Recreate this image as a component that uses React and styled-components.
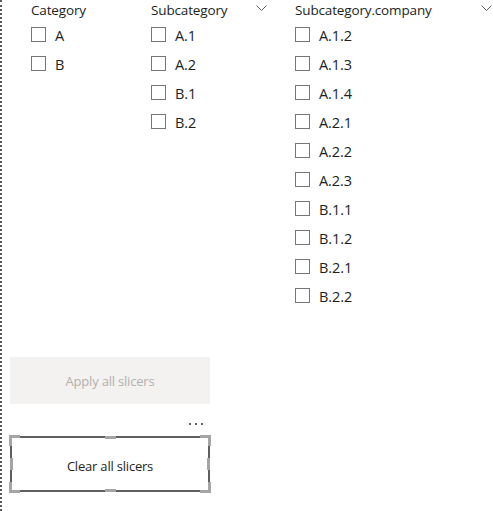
import React from "react";
import styled, { createGlobalStyle } from "styled-components";

const Global = createGlobalStyle`
  html, body { margin: 0; padding: 0; background: #fff; }
  body { font-family: "Segoe UI", "Open Sans", "Noto Sans", sans-serif; color: #252423; }
`;

const Page = styled.div`
  box-sizing: border-box;
  width: 493px;
  height: 511px;
  border-left: 2px dotted #5a5a5a;
  display: flex;
  flex-direction: column;
  overflow: hidden;
`;

const Slicers = styled.div`
  display: grid;
  grid-template-columns: 120px 144px 1fr;
  margin-left: 29px;
`;

const Column = styled.div`
  display: flex;
  flex-direction: column;
`;

const Header = styled.div`
  height: 20px;
  display: flex;
  align-items: center;
  justify-content: space-between;
  padding-right: ${(p) => p.$pr || 0}px;
`;

const Title = styled.span`
  font-family: "Open Sans", sans-serif;
  font-size: 13.5px;
  letter-spacing: -0.15px;
  color: #201f1e;
  line-height: 20px;
  white-space: nowrap;
`;

const Chevron = styled.svg`
  width: 11px;
  height: 6px;
  margin-top: -4px;
  display: block;
`;

const Row = styled.label`
  height: 29px;
  display: flex;
  align-items: center;
  gap: 9px;
`;

const Box = styled.span`
  box-sizing: border-box;
  width: 15px;
  height: 15px;
  border: 1px solid #7a7574;
  background: #fff;
  flex: none;
`;

const ItemText = styled.span`
  font-family: "Open Sans", sans-serif;
  font-size: 14.5px;
  color: #201f1e;
  letter-spacing: -0.1px;
  margin-top: 1px;
`;

const Buttons = styled.div`
  margin-top: 47px;
  padding-left: 8px;
  width: 200px;
  display: flex;
  flex-direction: column;
`;

const ApplyButton = styled.div`
  height: 47px;
  background: #f3f2f1;
  color: #b3b0ad;
  display: flex;
  align-items: center;
  justify-content: center;
  font-family: "Open Sans", sans-serif;
  font-size: 13px;
  letter-spacing: -0.2px;
`;

const MoreRow = styled.div`
  height: 32px;
  display: flex;
  justify-content: flex-end;
  align-items: center;
  gap: 4px;
  padding-right: 7px;
  padding-top: 7px;
  box-sizing: border-box;
`;

const Dot = styled.span`
  width: 2px;
  height: 2px;
  background: #605e5c;
`;

const ClearButton = styled.div`
  position: relative;
  box-sizing: border-box;
  height: 56px;
  border: 2px solid #5f5f5f;
  display: flex;
  align-items: center;
  justify-content: center;
  padding-top: 3px;
  font-family: "Open Sans", sans-serif;
  font-size: 13px;
  letter-spacing: -0.2px;
  color: #252423;
`;

const Corner = styled.span`
  position: absolute;
  width: 8px;
  height: 8px;
  border-color: #a5a5a5;
  border-style: solid;
  border-width: 0;
  ${(p) => (p.$v === "t" ? "top: -3px; border-top-width: 3px;" : "bottom: -3px; border-bottom-width: 3px;")}
  ${(p) => (p.$h === "l" ? "left: -3px; border-left-width: 3px;" : "right: -3px; border-right-width: 3px;")}
`;

const EdgeH = styled.span`
  position: absolute;
  left: 50%;
  margin-left: -5px;
  width: 11px;
  height: 3px;
  background: #a5a5a5;
  ${(p) => (p.$v === "t" ? "top: -2px;" : "bottom: -2px;")}
`;

const EdgeV = styled.span`
  position: absolute;
  top: 50%;
  margin-top: -6px;
  width: 3px;
  height: 12px;
  background: #a5a5a5;
  ${(p) => (p.$h === "l" ? "left: -2px;" : "right: -2px;")}
`;

const ChevronIcon = () => (
  <Chevron viewBox="0 0 11 6">
    <path d="M0.5 0.5 L5.5 5.5 L10.5 0.5" fill="none" stroke="#605e5c" strokeWidth="1" />
  </Chevron>
);

const columns = [
  { title: "Category", items: ["A", "B"] },
  { title: "Subcategory", items: ["A.1", "A.2", "B.1", "B.2"], chevron: true, pr: 28 },
  {
    title: "Subcategory.company",
    items: ["A.1.2", "A.1.3", "A.1.4", "A.2.1", "A.2.2", "A.2.3", "B.1.1", "B.1.2", "B.2.1", "B.2.2"],
    chevron: true,
    pr: 1,
  },
];

export default function App() {
  return (
    <>
      <Global />
      <Page>
        <Slicers>
          {columns.map((c) => (
            <Column key={c.title}>
              <Header $pr={c.pr}>
                <Title>{c.title}</Title>
                {c.chevron && <ChevronIcon />}
              </Header>
              {c.items.map((it) => (
                <Row key={it}>
                  <Box />
                  <ItemText>{it}</ItemText>
                </Row>
              ))}
            </Column>
          ))}
        </Slicers>
        <Buttons>
          <ApplyButton>Apply all slicers</ApplyButton>
          <MoreRow>
            <Dot />
            <Dot />
            <Dot />
          </MoreRow>
          <ClearButton>
            Clear all slicers
            <Corner $v="t" $h="l" />
            <Corner $v="t" $h="r" />
            <Corner $v="b" $h="l" />
            <Corner $v="b" $h="r" />
            <EdgeH $v="t" />
            <EdgeH $v="b" />
            <EdgeV $h="l" />
            <EdgeV $h="r" />
          </ClearButton>
        </Buttons>
      </Page>
    </>
  );
}
